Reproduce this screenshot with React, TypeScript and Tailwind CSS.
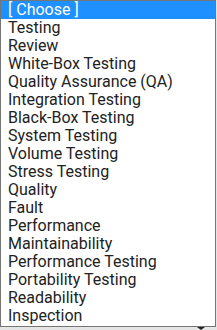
const options = [
  "[ Choose ]",
  "Testing",
  "Review",
  "White-Box Testing",
  "Quality Assurance (QA)",
  "Integration Testing",
  "Black-Box Testing",
  "System Testing",
  "Volume Testing",
  "Stress Testing",
  "Quality",
  "Fault",
  "Performance",
  "Maintainability",
  "Performance Testing",
  "Portability Testing",
  "Readability",
  "Inspection",
];

export default function App() {
  return (
    <div className="h-[330px] w-[217px] overflow-hidden bg-[#e5e5e5] font-['Roboto',sans-serif]">
      <ul className="h-[327px] w-[216px] overflow-hidden border border-[#767676] bg-white">
        {options.map((opt, i) => (
          <li
            key={opt}
            className={
              i === 0
                ? "h-[18px] whitespace-nowrap bg-[#1e90ff] pl-[7px] text-[16px] leading-[18px] text-white"
                : "h-[18px] whitespace-nowrap pl-[7px] text-[16px] leading-[18px] text-[#222]"
            }
          >
            {opt}
          </li>
        ))}
      </ul>
      <div className="flex h-[3px] items-start justify-end pr-[12px]">
        <span className="h-0 w-0 border-x-[4px] border-t-[3px] border-x-transparent border-t-[#222]" />
      </div>
    </div>
  );
}
